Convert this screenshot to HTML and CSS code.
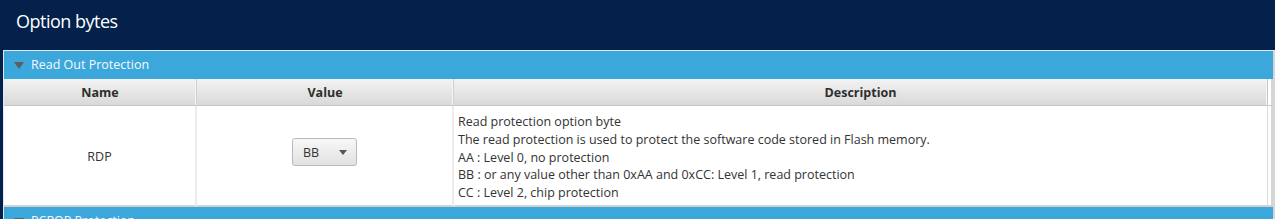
FILE: index.html
```html
<!DOCTYPE html>
<html>
<head>
<meta charset="utf-8">
<link rel="stylesheet" href="styles.css">
</head>
<body>
<div class="title">Option bytes</div>
<div class="panel">
  <div class="panel-main">
    <div class="group-head"><span class="tri"></span>Read Out Protection</div>
    <div class="table">
      <div class="th">Name</div>
      <div class="th">Value</div>
      <div class="th th-last">Description</div>
      <div class="th-pad"></div>
      <div class="td td-name">RDP</div>
      <div class="td td-value">
        <div class="combo"><span class="combo-text">BB</span><span class="combo-arrow"></span></div>
      </div>
      <div class="td td-desc">
        <div>Read protection option byte</div>
        <div>The read protection is used to protect the software code stored in Flash memory.</div>
        <div>AA : Level 0, no protection</div>
        <div>BB : or any value other than 0xAA and 0xCC: Level 1, read protection</div>
        <div>CC : Level 2, chip protection</div>
      </div>
      <div class="td-pad"></div>
    </div>
    <div class="group-head"><span class="tri"></span>PCROP Protection</div>
  </div>
  <div class="scrollbar"></div>
</div>
</body>
</html>
```
FILE: styles.css
```css
html, body {
  margin: 0;
  padding: 0;
}
body {
  background: #03214a;
  width: 1275px;
  height: 219px;
  overflow: hidden;
  font-family: "Open Sans", "Noto Sans", sans-serif;
}
.title {
  height: 50px;
  box-sizing: border-box;
  padding: 9px 0 0 16px;
  color: #ffffff;
  font-size: 18px;
  letter-spacing: -0.5px;
  line-height: 25px;
}
.panel {
  margin-left: 3px;
  border-top: 1px solid #e2e8ef;
  border-left: 1px solid #e2e8ef;
  display: flex;
  background: #ffffff;
}
.panel-main {
  flex: 1;
}
.scrollbar {
  width: 2px;
  background: #d6d6d6;
}
.group-head {
  height: 28px;
  background: #3ca7db;
  color: #f4faff;
  font-size: 12.5px;
  line-height: 28px;
  display: flex;
  align-items: center;
  padding-left: 10px;
}
.tri {
  width: 0;
  height: 0;
  border-left: 5px solid transparent;
  border-right: 5px solid transparent;
  border-top: 7px solid #5a6068;
  margin-right: 7px;
  margin-top: 1px;
}
.table {
  display: grid;
  grid-template-columns: 193px 257px 814px 5px;
}
.th {
  height: 27px;
  box-sizing: border-box;
  background: linear-gradient(#f3f3f3, #d9d9d9);
  border-bottom: 1px solid #c6c6c6;
  border-right: 1px solid #cfcfcf;
  box-shadow: inset -1px 0 0 #f6f6f6;
  font-weight: bold;
  font-size: 12.5px;
  color: #2e2e2e;
  text-align: center;
  line-height: 27px;
}
.th-last {
  border-right: 1px solid #c6c6c6;
}
.th-pad {
  height: 27px;
  background: #ffffff;
  border-right: 2px solid #d6d6d6;
  box-sizing: border-box;
  border-bottom: 1px solid #c6c6c6;
}
.td {
  height: 101px;
  box-sizing: border-box;
  border-bottom: 2px solid #d2d2d2;
  border-right: 2px solid #ececec;
  font-size: 12.5px;
  color: #333333;
}
.td-name {
  display: flex;
  align-items: center;
  justify-content: center;
  padding-top: 1px;
}
.td-value {
  display: flex;
  justify-content: center;
  padding-top: 32px;
}
.td-desc {
  padding: 7px 0 0 4px;
  line-height: 17.75px;
  border-right: 1px solid #dcdcdc;
}
.td-pad {
  height: 101px;
  box-sizing: border-box;
  border-bottom: 2px solid #d2d2d2;
  border-right: 2px solid #d6d6d6;
}
.combo {
  width: 65px;
  height: 28px;
  box-sizing: border-box;
  border: 1px solid #b9b9b9;
  border-radius: 3px;
  background: linear-gradient(#f7f7f7, #e2e2e2);
  display: flex;
  align-items: center;
  justify-content: space-between;
  padding: 0 9px 0 10px;
}
.combo-text {
  font-size: 12.5px;
  color: #333333;
}
.combo-arrow {
  width: 0;
  height: 0;
  border-left: 4px solid transparent;
  border-right: 4px solid transparent;
  border-top: 5px solid #555555;
}
```
